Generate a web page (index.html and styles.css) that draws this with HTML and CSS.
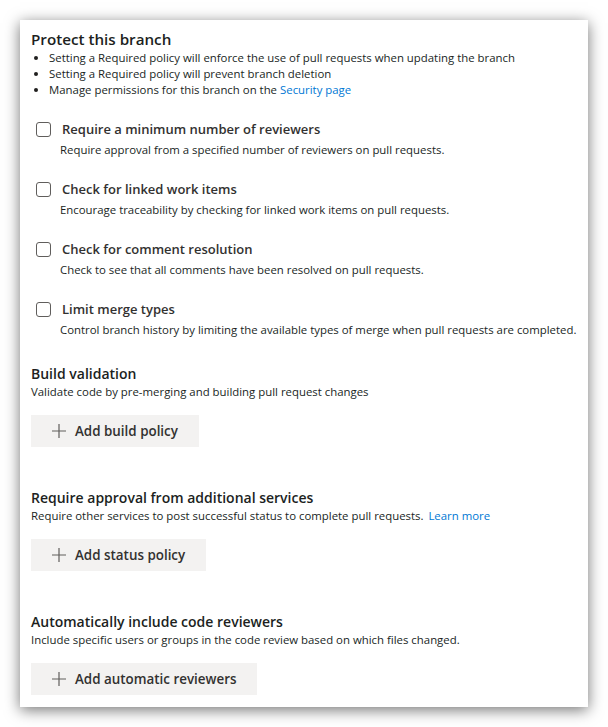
FILE: index.html
```html
<!DOCTYPE html>
<html>

<head>
  <title>Branch policies</title>
  <link rel="stylesheet" href="styles.css">
</head>

<body>
  <main class="panel">
    <section class="protect">
      <div class="section-title">Protect this branch</div>
      <ul class="notes">
        <li>Setting a Required policy will enforce the use of pull requests when updating the branch</li>
        <li>Setting a Required policy will prevent branch deletion</li>
        <li>Manage permissions for this branch on the <a class="link" href="#">Security page</a></li>
      </ul>
    </section>

    <div class="policy">
      <div class="policy-head">
        <span class="checkbox"></span>
        <span class="policy-label">Require a minimum number of reviewers</span>
      </div>
      <div class="policy-desc">Require approval from a specified number of reviewers on pull requests.</div>
    </div>
    <div class="policy">
      <div class="policy-head">
        <span class="checkbox"></span>
        <span class="policy-label">Check for linked work items</span>
      </div>
      <div class="policy-desc">Encourage traceability by checking for linked work items on pull requests.</div>
    </div>
    <div class="policy">
      <div class="policy-head">
        <span class="checkbox"></span>
        <span class="policy-label">Check for comment resolution</span>
      </div>
      <div class="policy-desc">Check to see that all comments have been resolved on pull requests.</div>
    </div>
    <div class="policy">
      <div class="policy-head">
        <span class="checkbox"></span>
        <span class="policy-label">Limit merge types</span>
      </div>
      <div class="policy-desc">Control branch history by limiting the available types of merge when pull requests are completed.</div>
    </div>

    <section class="group first-group">
      <div class="group-title">Build validation</div>
      <div class="group-desc">Validate code by pre-merging and building pull request changes</div>
      <button class="add-btn">
        <svg class="plus" width="16" height="16" viewBox="0 0 16 16"><path d="M8 1v14M1 8h14" stroke="#605e5c" stroke-width="1.2" fill="none"/></svg>
        Add build policy
      </button>
    </section>

    <section class="group">
      <div class="group-title">Require approval from additional services</div>
      <div class="group-desc">Require other services to post successful status to complete pull requests. <a class="link learn" href="#">Learn more</a></div>
      <button class="add-btn">
        <svg class="plus" width="16" height="16" viewBox="0 0 16 16"><path d="M8 1v14M1 8h14" stroke="#605e5c" stroke-width="1.2" fill="none"/></svg>
        Add status policy
      </button>
    </section>

    <section class="group">
      <div class="group-title">Automatically include code reviewers</div>
      <div class="group-desc">Include specific users or groups in the code review based on which files changed.</div>
      <button class="add-btn">
        <svg class="plus" width="16" height="16" viewBox="0 0 16 16"><path d="M8 1v14M1 8h14" stroke="#605e5c" stroke-width="1.2" fill="none"/></svg>
        Add automatic reviewers
      </button>
    </section>
  </main>
</body>

</html>
```

FILE: styles.css
```css
body {
  margin: 0;
  padding: 20px;
  background-color: white;
  font-family: "Open Sans", Arial, sans-serif;
  color: #201f1e;
}

.panel {
  width: 568px;
  height: 687px;
  box-sizing: border-box;
  padding: 9px 11px 11px 11px;
  background-color: white;
  box-shadow: 0 3px 14px rgba(0, 0, 0, 0.55);
}

.section-title {
  font-size: 15.2px;
  font-weight: 600;
  line-height: 20px;
}

.notes {
  margin: 1px 0 0 0;
  padding: 0 0 0 18px;
  font-size: 11.4px;
  line-height: 16px;
}

.link {
  color: #0078d4;
  text-decoration: none;
}

.learn {
  margin-left: 2px;
}

.policy {
  margin-top: 21px;
  height: 39px;
}

.policy-head {
  display: flex;
  align-items: center;
  height: 20px;
  padding-left: 5px;
}

.checkbox {
  width: 13px;
  height: 13px;
  border: 1px solid #605e5c;
  border-radius: 3px;
  margin-right: 11px;
}

.policy-label {
  font-size: 13px;
  font-weight: 600;
  color: #323130;
}

.policy-desc {
  margin-top: 3px;
  padding-left: 29px;
  font-size: 11.4px;
  line-height: 16px;
  color: #201f1e;
}

.group {
  margin-top: 41px;
}

.first-group {
  margin-top: 26px;
}

.group-title {
  font-size: 14px;
  font-weight: 600;
  line-height: 20px;
}

.group-desc {
  font-size: 11.4px;
  line-height: 16px;
}

.add-btn {
  margin-top: 15px;
  height: 32px;
  display: flex;
  align-items: center;
  gap: 8px;
  padding: 0 21px 0 20px;
  border: none;
  background-color: #f3f2f1;
  font-family: inherit;
  font-size: 13.4px;
  font-weight: 600;
  color: #323130;
}
```
